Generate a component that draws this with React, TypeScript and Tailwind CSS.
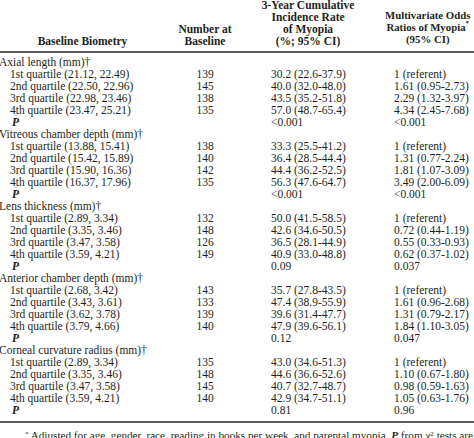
import React from 'react';

type Group = {
  label: string;
  rows: [string, string, string, string][];
  p: [string, string];
};

const groups: Group[] = [
  {
    label: 'Axial length (mm)†',
    rows: [
      ['1st quartile (21.12, 22.49)', '139', '30.2 (22.6-37.9)', '1 (referent)'],
      ['2nd quartile (22.50, 22.96)', '145', '40.0 (32.0-48.0)', '1.61 (0.95-2.73)'],
      ['3rd quartile (22.98, 23.46)', '138', '43.5 (35.2-51.8)', '2.29 (1.32-3.97)'],
      ['4th quartile (23.47, 25.21)', '135', '57.0 (48.7-65.4)', '4.34 (2.45-7.68)'],
    ],
    p: ['<0.001', '<0.001'],
  },
  {
    label: 'Vitreous chamber depth (mm)†',
    rows: [
      ['1st quartile (13.88, 15.41)', '138', '33.3 (25.5-41.2)', '1 (referent)'],
      ['2nd quartile (15.42, 15.89)', '140', '36.4 (28.5-44.4)', '1.31 (0.77-2.24)'],
      ['3rd quartile (15.90, 16.36)', '142', '44.4 (36.2-52.5)', '1.81 (1.07-3.09)'],
      ['4th quartile (16.37, 17.96)', '135', '56.3 (47.6-64.7)', '3.49 (2.00-6.09)'],
    ],
    p: ['<0.001', '<0.001'],
  },
  {
    label: 'Lens thickness (mm)†',
    rows: [
      ['1st quartile (2.89, 3.34)', '132', '50.0 (41.5-58.5)', '1 (referent)'],
      ['2nd quartile (3.35, 3.46)', '148', '42.6 (34.6-50.5)', '0.72 (0.44-1.19)'],
      ['3rd quartile (3.47, 3.58)', '126', '36.5 (28.1-44.9)', '0.55 (0.33-0.93)'],
      ['4th quartile (3.59, 4.21)', '149', '40.9 (33.0-48.8)', '0.62 (0.37-1.02)'],
    ],
    p: ['0.09', '0.037'],
  },
  {
    label: 'Anterior chamber depth (mm)†',
    rows: [
      ['1st quartile (2.68, 3.42)', '143', '35.7 (27.8-43.5)', '1 (referent)'],
      ['2nd quartile (3.43, 3.61)', '133', '47.4 (38.9-55.9)', '1.61 (0.96-2.68)'],
      ['3rd quartile (3.62, 3.78)', '139', '39.6 (31.4-47.7)', '1.31 (0.79-2.17)'],
      ['4th quartile (3.79, 4.66)', '140', '47.9 (39.6-56.1)', '1.84 (1.10-3.05)'],
    ],
    p: ['0.12', '0.047'],
  },
  {
    label: 'Corneal curvature radius (mm)†',
    rows: [
      ['1st quartile (2.89, 3.34)', '135', '43.0 (34.6-51.3)', '1 (referent)'],
      ['2nd quartile (3.35, 3.46)', '148', '44.6 (36.6-52.6)', '1.10 (0.67-1.80)'],
      ['3rd quartile (3.47, 3.58)', '145', '40.7 (32.7-48.7)', '0.98 (0.59-1.63)'],
      ['4th quartile (3.59, 4.21)', '140', '42.9 (34.7-51.1)', '1.05 (0.63-1.76)'],
    ],
    p: ['0.81', '0.96'],
  },
];

export default function App() {
  return (
    <div className="w-[474px] h-[438px] overflow-hidden bg-white text-[#231f20] font-['Liberation_Serif','Times_New_Roman',serif]">
      <table className="table-fixed border-collapse w-[474px] -mt-px">
        <colgroup>
          <col className="w-[165px]" />
          <col className="w-[80px]" />
          <col className="w-[126px]" />
          <col className="w-[103px]" />
        </colgroup>
        <thead>
          <tr className="font-bold text-[11.5px] leading-[12px] align-bottom">
            <th className="pb-[4px] text-center">Baseline Biometry</th>
            <th className="pb-[4px] text-center">
              Number at
              <br />
              Baseline
            </th>
            <th className="pb-[4px] text-center">
              3-Year Cumulative
              <br />
              Incidence Rate
              <br />
              of Myopia
              <br />
              (%; 95% CI)
            </th>
            <th className="pb-[6px] pl-[14px] text-left">
              <div className="inline-block text-center text-[10.8px] whitespace-nowrap">
                Multivariate Odds
                <br />
                Ratios of Myopia<sup className="text-[7px] align-[3px]">*</sup>
                <br />
                (95% CI)
              </div>
            </th>
          </tr>
          <tr>
            <td colSpan={4} className="p-0">
              <div className="h-[2px] bg-[#5a5a5a]" />
            </td>
          </tr>
        </thead>
        <tbody className="text-[11.5px] leading-[12px]">
          <tr>
            <td colSpan={4} className="h-[3px] p-0" />
          </tr>
          {groups.map((g) => (
            <React.Fragment key={g.label}>
              <tr>
                <td className="whitespace-nowrap -indent-px">{g.label}</td>
                <td />
                <td />
                <td />
              </tr>
              {g.rows.map((r) => (
                <tr key={r[0]}>
                  <td className="pl-[10px] whitespace-nowrap">{r[0]}</td>
                  <td className="text-center">{r[1]}</td>
                  <td className="pl-[26px] whitespace-nowrap">{r[2]}</td>
                  <td className="pl-[23px] whitespace-nowrap">{r[3]}</td>
                </tr>
              ))}
              <tr>
                <td className="pl-[12px] font-bold italic">P</td>
                <td />
                <td className="pl-[26px]">{g.p[0]}</td>
                <td className="pl-[23px]">{g.p[1]}</td>
              </tr>
            </React.Fragment>
          ))}
          <tr>
            <td colSpan={4} className="h-[5px] p-0" />
          </tr>
          <tr>
            <td colSpan={4} className="p-0">
              <div className="h-[2px] bg-[#5a5a5a]" />
            </td>
          </tr>
        </tbody>
      </table>
      <p className="mt-[6px] pl-[25px] whitespace-nowrap text-[11.2px] leading-[12px]">
        <sup className="text-[7px]">*</sup> Adjusted for age, gender, race, reading in books per week, and parental
        myopia. <i className="font-bold">P</i> from χ<sup className="text-[7px]">2</sup> tests are
      </p>
    </div>
  );
}
